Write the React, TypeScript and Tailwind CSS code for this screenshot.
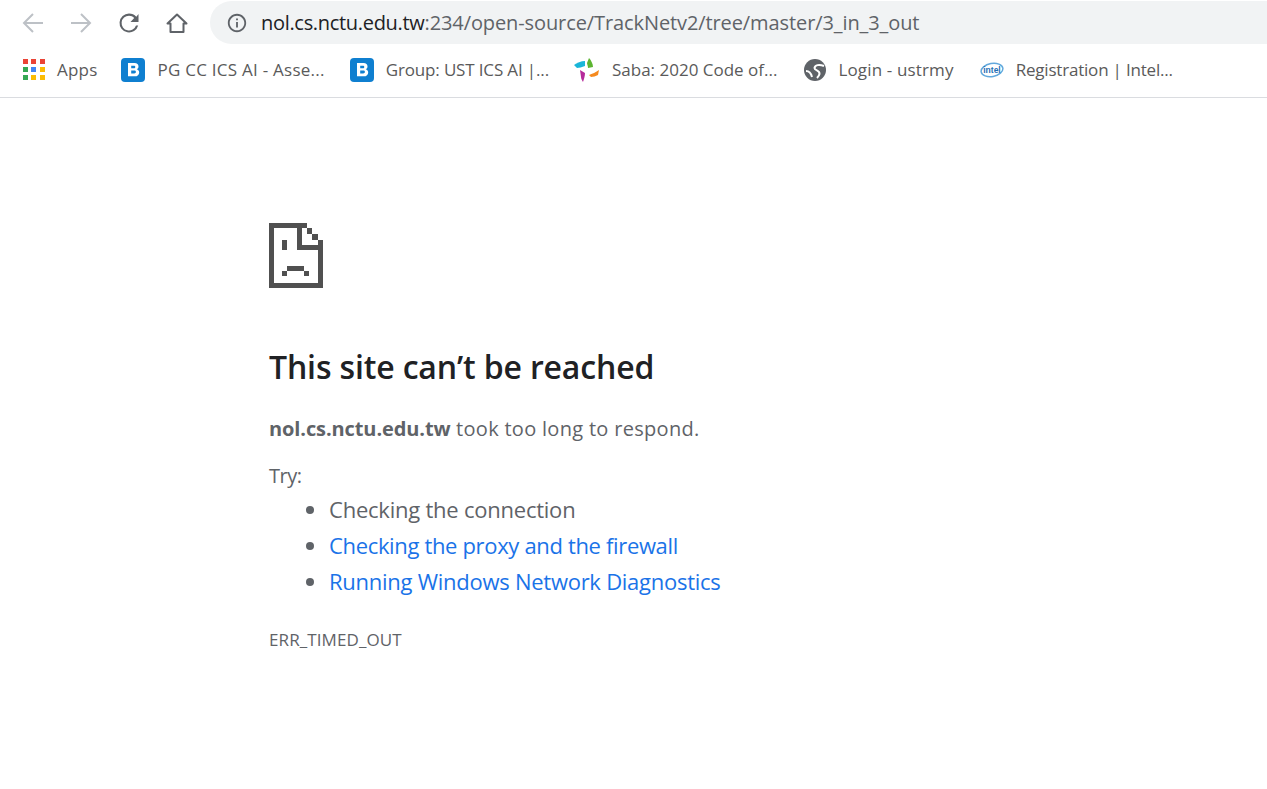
import { ReactNode } from "react";

function Bookmark({ icon, label, className, textClass }: { icon: ReactNode; label: string; className: string; textClass: string }) {
  return (
    <div className={`flex items-center ${className}`}>
      <span className="flex h-6 shrink-0 items-center justify-center">{icon}</span>
      <span className={`ml-[12px] whitespace-nowrap text-[17px] text-[#5a5a5a] ${textClass}`}>{label}</span>
    </div>
  );
}

function BlueB() {
  return (
    <svg width="24" height="24" viewBox="0 0 24 24">
      <rect x="0" y="0" width="24" height="24" rx="4" fill="#0f7fd0" />
      <path
        d="M7 5h6.500c2.600 0 4 1.400 4 3.400 0 1.300-.7 2.300-1.700 2.800 1.400.4 2.400 1.600 2.400 3.200 0 2.400-1.700 3.900-4.400 3.900H7V5zm3.200 5.300h2.600c1 0 1.500-.5 1.500-1.300s-.5-1.200-1.500-1.200h-2.600v2.500zm0 5.100h3c1.100 0 1.700-.5 1.700-1.400s-.6-1.400-1.700-1.400h-3v2.800z"
        fill="#fff"
      />
    </svg>
  );
}

function AppsIcon() {
  const colors = ["#ea4335", "#ea4335", "#ea4335", "#34a853", "#4285f4", "#fbbc04", "#34a853", "#fbbc04", "#fbbc04"];
  return (
    <div className="grid w-6 grid-cols-3 gap-[3px] pl-[2px]">
      {colors.map((c, i) => (
        <span key={i} className="h-[5px] w-[5px]" style={{ backgroundColor: c }} />
      ))}
    </div>
  );
}

function SabaIcon() {
  return (
    <svg width="26" height="26" viewBox="0 0 26 26">
      <path d="M0 8C3 6 7 4 11 4l0 5C8 10 5 11 3 11z" fill="#19b5d8" />
      <path d="M15 1c2 2 4 6 4 9l-5 1c0-2-1-4-1-5z" fill="#5cb531" />
      <path d="M15 18c3-1 7-3 10-5l-1 5c-2 1-5 2-7 2z" fill="#f58a1f" />
      <path d="M6 13l5 3c0 3-1 6-2 9-1-2-2-3-2-5z" fill="#b62a9b" />
    </svg>
  );
}

function GlobeIcon() {
  return (
    <svg width="22" height="22" viewBox="0 0 22 22">
      <circle cx="11" cy="11" r="11" fill="#5f6368" />
      <path d="M20 7C15 5 11 6 10.500 9 10.500 12 16 11 15.500 15 15 17 14 18 13 19" fill="none" stroke="#fff" strokeWidth="2" />
      <path d="M2 12c3 0 5 2 6 6" fill="none" stroke="#fff" strokeWidth="2" />
    </svg>
  );
}

function IntelIcon() {
  return (
    <svg width="24" height="18" viewBox="0 0 24 18">
      <ellipse cx="12" cy="9" rx="11" ry="6.500" fill="none" stroke="#62a8dc" strokeWidth="1.500" transform="rotate(-10 12 9)" />
      <text x="12" y="12" textAnchor="middle" fontSize="8.500" fontWeight="700" fill="#1f70b5" fontFamily="Liberation Sans, sans-serif">
        intel
      </text>
    </svg>
  );
}

function SadTab() {
  return (
    <svg width="54" height="65" viewBox="0 0 54 65" shapeRendering="crispEdges" fill="#505050">
      <rect x="0" y="0" width="38" height="5" />
      <rect x="0" y="0" width="5" height="65" />
      <rect x="0" y="60" width="54" height="5" />
      <rect x="49" y="17" width="5" height="48" />
      <rect x="28" y="0" width="5" height="27" />
      <rect x="28" y="22" width="26" height="5" />
      <rect x="38" y="5" width="5" height="6" />
      <rect x="43" y="11" width="6" height="6" />
      <rect x="13" y="17" width="5" height="10" />
      <rect x="18" y="43" width="17" height="5" />
      <rect x="13" y="48" width="5" height="5" />
      <rect x="35" y="48" width="5" height="5" />
    </svg>
  );
}

export default function App() {
  return (
    <div className="h-[789px] w-[1267px] overflow-hidden bg-white font-['Open_Sans','Noto_Sans',sans-serif]">
      {/* Browser chrome */}
      <div className="border-b border-[#dadce0]">
        <div className="flex h-[45px] items-center">
          <div className="flex items-center pl-[21px]">
            <svg width="24" height="24" viewBox="0 0 24 24" fill="none" stroke="#bdc1c6" strokeWidth="2">
              <path d="M22 12H3M12 3l-9 9 9 9" />
            </svg>
            <svg className="ml-[24px]" width="24" height="24" viewBox="0 0 24 24" fill="none" stroke="#bdc1c6" strokeWidth="2">
              <path d="M2 12h19M12 3l9 9-9 9" />
            </svg>
            <svg className="ml-[24px]" width="24" height="24" viewBox="0 0 24 24" fill="#5f6368">
              <path d="M19.300 5.700A10 10 0 0 0 12 2.500a9.500 9.500 0 1 0 9.200 12h-2.200a7.400 7.400 0 1 1-7-9.800c2 0 3.900.8 5.200 2.200L13.500 11H21.500V3z" />
            </svg>
            <svg className="ml-[24px]" width="24" height="24" viewBox="0 0 24 24" fill="none" stroke="#5f6368" strokeWidth="2">
              <path d="M2.500 12.500 12 3.500l9.500 9H18.500V21h-13v-8.500z" strokeLinejoin="round" />
            </svg>
          </div>
          <div className="ml-[21px] flex h-[43px] flex-1 items-center rounded-l-[22px] bg-[#f1f3f4] pl-[16px]">
            <svg width="22" height="22" viewBox="0 0 24 24" fill="#5f6368">
              <path d="M11 7h2v2h-2zm0 4h2v6h-2zm1-9C6.480 2 2 6.480 2 12s4.480 10 10 10 10-4.480 10-10S17.520 2 12 2zm0 18c-4.410 0-8-3.590-8-8s3.590-8 8-8 8 3.590 8 8-3.590 8-8 8z" />
            </svg>
            <span className="ml-[13px] whitespace-nowrap text-[20px] tracking-[-0.1px] text-[#5f6368]">
              <span className="tracking-[-0.31px] text-[#202124]">nol.cs.nctu.edu.tw</span>:234/open-source/TrackNetv2/tree/master/3_in_3_out
            </span>
          </div>
        </div>
        <div className="flex h-[52px] items-center pb-[3px] pl-[21px]">
          <Bookmark icon={<AppsIcon />} label="Apps" className="" textClass="tracking-[0.2px]" />
          <Bookmark icon={<BlueB />} label="PG CC ICS AI - Asse..." className="ml-[24px]" textClass="tracking-[0.25px]" />
          <Bookmark icon={<BlueB />} label="Group: UST ICS AI |..." className="ml-[25px]" textClass="tracking-[-0.15px]" />
          <Bookmark icon={<SabaIcon />} label="Saba: 2020 Code of..." className="ml-[25px]" textClass="" />
          <Bookmark icon={<GlobeIcon />} label="Login - ustrmy" className="ml-[27px]" textClass="tracking-[0.15px]" />
          <Bookmark icon={<IntelIcon />} label="Registration | Intel..." className="ml-[26px]" textClass="tracking-[-0.2px]" />
        </div>
      </div>

      {/* Error page */}
      <div className="pl-[269px] pt-[125px] text-[#5f6368]">
        <SadTab />
        <h1 className="mt-[59px] text-[32px] font-[550] leading-[40px] tracking-[-0.15px] text-[#202124]">
          This site can’t be reached
        </h1>
        <p className="mt-[29px] text-[20px] leading-[26px] tracking-[0.3px]">
          <strong className="font-bold tracking-[-0.1px]">nol.cs.nctu.edu.tw</strong> took too long to respond.
        </p>
        <p className="mt-[21px] text-[20px] leading-[26px] tracking-[-0.5px]">Try:</p>
        <ul className="ml-[60px] mt-[2px] list-disc text-[22px] leading-[36px] tracking-[-0.23px] marker:text-[#5f6368]">
          <li>Checking the connection</li>
          <li className="tracking-[-0.34px] text-[#1a73e8]">Checking the proxy and the firewall</li>
          <li className="tracking-[-0.26px] text-[#1a73e8]">Running Windows Network Diagnostics</li>
        </ul>
        <p className="mt-[29px] text-[17px] leading-[24px] tracking-[0.1px]">ERR_TIMED_OUT</p>
      </div>
    </div>
  );
}
